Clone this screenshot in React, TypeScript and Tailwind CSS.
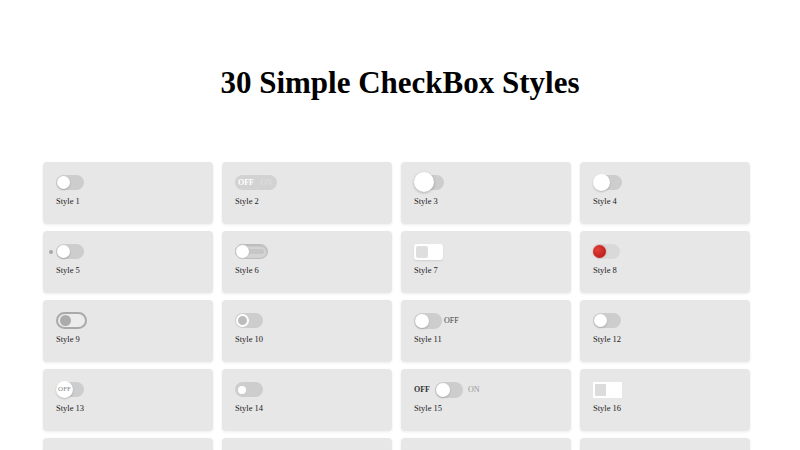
import React from "react";

const serif = { fontFamily: '"Liberation Serif", "Times New Roman", serif' };

function Track({ w = 28, children, className = "" }: { w?: number; children?: React.ReactNode; className?: string }) {
  return (
    <div className={`relative h-[15px] rounded-full bg-[#cdcdcd] ${className}`} style={{ width: w }}>
      {children}
    </div>
  );
}

function Knob({ size = 13, left = 1, top = 1, className = "" }: { size?: number; left?: number; top?: number; className?: string }) {
  return (
    <div
      className={`absolute rounded-full bg-white shadow-[0_1px_2px_rgba(0,0,0,0.2)] ${className}`}
      style={{ width: size, height: size, left, top }}
    />
  );
}

const toggles: Record<number, React.ReactNode> = {
  1: (
    <Track>
      <Knob />
    </Track>
  ),
  2: (
    <div className="flex h-[15px] w-[42px] items-center justify-between rounded-full bg-[#d2d2d2] pl-[3px] pr-[5px] text-[8px] font-bold leading-none">
      <span className="text-white">OFF</span>
      <span className="font-normal text-[#e0e0e0]">ON</span>
    </div>
  ),
  3: (
    <div className="relative ml-[4px]">
      <Track w={26}>
        <Knob size={20} left={-4} top={-3} className="shadow-[0_1px_3px_rgba(0,0,0,0.25)]" />
      </Track>
    </div>
  ),
  4: (
    <div className="relative ml-[2px]">
      <Track w={27}>
        <Knob size={17} left={-2} top={-1} />
      </Track>
    </div>
  ),
  5: (
    <div className="relative">
      <div className="absolute left-[-7px] top-[6px] h-[4px] w-[4px] rounded-full bg-[#a8a8a8]" />
      <Track>
        <Knob />
      </Track>
    </div>
  ),
  6: (
    <div className="relative h-[15px] w-[33px] rounded-full border border-[#bdbdbd] bg-[#d4d4d4] shadow-[inset_0_1px_2px_rgba(0,0,0,0.15)]">
      <div className="absolute left-[12px] right-[3px] top-[4px] h-[5px] rounded-full bg-[#c6c6c6]" />
      <div className="absolute left-[-1px] top-[-1px] h-[15px] w-[15px] rounded-full border border-[#bdbdbd] bg-white" />
    </div>
  ),
  7: (
    <div className="flex h-[16px] w-[29px] items-center rounded-[3px] bg-white px-[2px] shadow-[0_1px_2px_rgba(0,0,0,0.1)]">
      <div className="h-[12px] w-[12px] rounded-[2px] bg-[#dedede]" />
    </div>
  ),
  8: (
    <div className="relative h-[15px] w-[27px] rounded-full bg-[#d9d9d9]">
      <div className="absolute left-0 top-[1px] h-[13px] w-[13px] rounded-full bg-[radial-gradient(circle_at_35%_35%,#e0403a,#b0120f)] shadow-[0_0_2px_rgba(180,0,0,0.4)]" />
    </div>
  ),
  9: (
    <div className="relative h-[17px] w-[31px] rounded-full border-2 border-[#a9a9a9] bg-[#ececec]">
      <div className="absolute left-[2px] top-[1px] h-[11px] w-[11px] rounded-full bg-[#ababab]" />
    </div>
  ),
  10: (
    <Track>
      <div className="absolute left-[1px] top-[1px] h-[13px] w-[13px] rounded-full border-2 border-white bg-[#bcbcbc]" />
    </Track>
  ),
  11: (
    <div className="flex items-center gap-[2px]">
      <div className="relative h-[16px] w-[28px] rounded-full bg-[#cdcdcd]">
        <Knob size={14} />
      </div>
      <span className="text-[8px] leading-none text-[#444]">OFF</span>
    </div>
  ),
  12: (
    <Track>
      <Knob />
    </Track>
  ),
  13: (
    <Track>
      <div className="absolute left-0 top-[-1px] flex h-[17px] w-[17px] items-center justify-center rounded-full bg-white text-[7px] leading-none text-[#888] shadow-[0_1px_2px_rgba(0,0,0,0.2)]">
        OFF
      </div>
    </Track>
  ),
  14: (
    <Track>
      <div className="absolute left-[3px] top-[3.5px] h-[8px] w-[8px] rounded-full bg-white" />
    </Track>
  ),
  15: (
    <div className="flex items-center">
      <span className="mr-[5px] text-[8px] font-bold leading-none text-[#333]">OFF</span>
      <div className="relative h-[16px] w-[28px] rounded-full bg-[#cdcdcd]">
        <Knob size={14} />
      </div>
      <span className="ml-[5px] text-[8px] leading-none text-[#999]">ON</span>
    </div>
  ),
  16: (
    <div className="flex h-[16px] w-[29px] items-center bg-white px-[2px]">
      <div className="h-[12px] w-[11px] bg-[#dcdcdc]" />
    </div>
  ),
};

function Card({ n }: { n: number }) {
  return (
    <div className="h-[62px] rounded-[4px] bg-[#e7e7e7] px-[13px] pt-[13px] shadow-[0_1px_3px_rgba(0,0,0,0.08)]">
      <div className="flex h-[15px] items-center">
        {toggles[n] ?? (
          <Track>
            <Knob />
          </Track>
        )}
      </div>
      <div className="mt-[5px] text-[8.5px] leading-[12px] text-[#222]">Style {n}</div>
    </div>
  );
}

export default function App() {
  const items = Array.from({ length: 30 }, (_, i) => i + 1);
  return (
    <div className="h-[450px] overflow-hidden bg-white" style={serif}>
      <h1 className="pt-[64px] text-center text-[31px] font-bold leading-[37px] text-black">
        30 Simple CheckBox Styles
      </h1>
      <div className="mt-[61px] grid w-[707px] grid-cols-4 gap-x-[9px] gap-y-[7px] ml-[43px]">
        {items.map((n) => (
          <Card key={n} n={n} />
        ))}
      </div>
    </div>
  );
}
